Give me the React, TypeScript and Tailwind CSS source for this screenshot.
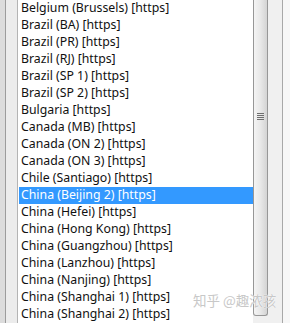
import React from "react";

const servers = [
  "Belgium (Brussels) [https]",
  "Brazil (BA) [https]",
  "Brazil (PR) [https]",
  "Brazil (RJ) [https]",
  "Brazil (SP 1) [https]",
  "Brazil (SP 2) [https]",
  "Bulgaria [https]",
  "Canada (MB) [https]",
  "Canada (ON 2) [https]",
  "Canada (ON 3) [https]",
  "Chile (Santiago) [https]",
  "China (Beijing 2) [https]",
  "China (Hefei) [https]",
  "China (Hong Kong) [https]",
  "China (Guangzhou) [https]",
  "China (Lanzhou) [https]",
  "China (Nanjing) [https]",
  "China (Shanghai 1) [https]",
  "China (Shanghai 2) [https]",
];

const SELECTED = "China (Beijing 2) [https]";

const App: React.FC = () => {
  return (
    <div
      className="relative flex h-[323px] w-[290px] overflow-hidden bg-white"
      style={{ fontFamily: '"Noto Sans", "Open Sans", sans-serif' }}
    >
      {/* window frame on the left */}
      <div className="w-[5px] bg-[#dcdcdc]" />
      <div className="w-px bg-[#9c9c9c]" />
      <div className="w-[11px] bg-[#ececec]" />
      <div className="w-px bg-[#b4b4b4]" />

      {/* list */}
      <div className="flex flex-1 flex-col pl-px">
        {servers.map((name) => (
          <div
            key={name}
            className={
              name === SELECTED
                ? "flex h-[17px] shrink-0 items-center bg-[#3399ff] pl-[2px] text-[12.3px] leading-none whitespace-nowrap text-white"
                : "flex h-[17px] shrink-0 items-center pl-[2px] text-[12.3px] leading-none whitespace-nowrap text-[#111]"
            }
          >
            {name}
          </div>
        ))}
      </div>

      {/* scrollbar */}
      <div className="flex w-[37px]">
        <div className="flex w-[15px] flex-col bg-[#f0f0f0]">
          <div className="flex h-[316px] flex-col items-center rounded-b-[3px] border-x border-b border-[#979797] bg-gradient-to-r from-[#f4f4f4] via-[#e8e8e8] to-[#d4d4d4] pt-[113px]">
            <div className="flex w-[7px] flex-col gap-px">
              <div className="h-px bg-[#6e6e6e]" />
              <div className="h-px bg-[#6e6e6e]" />
              <div className="h-px bg-[#6e6e6e]" />
              <div className="h-px bg-[#6e6e6e]" />
            </div>
          </div>
        </div>
        <div className="w-[14px] bg-[#f0f0f0]" />
        <div className="w-px bg-[#a8a8a8]" />
        <div className="flex-1 bg-[#f7f7f7]" />
      </div>

      {/* watermark */}
      <div
        className="absolute left-[193px] top-[294px] text-[13.5px] leading-none whitespace-nowrap text-[#c8c8c8]"
        style={{
          fontFamily: '"Noto Sans CJK SC", sans-serif',
          textShadow: "0 0 1px #fff, 0 0 1px #fff",
        }}
      >
        知乎 @趣浓孩
      </div>
    </div>
  );
};

export default App;
